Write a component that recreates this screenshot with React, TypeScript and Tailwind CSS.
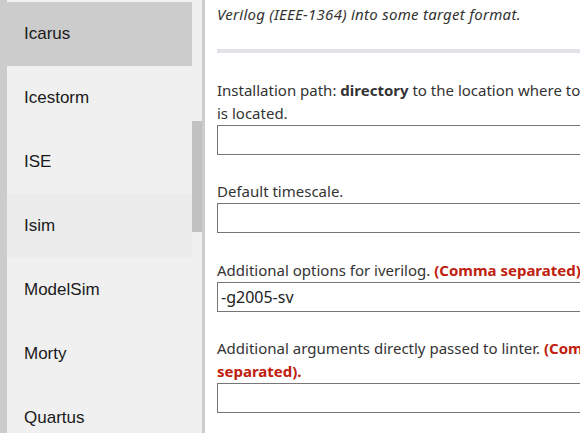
import React from "react";

const items = ["Icarus", "Icestorm", "ISE", "Isim", "ModelSim", "Morty", "Quartus"];

function Field({
  label,
  value,
  className,
}: {
  label: React.ReactNode;
  value?: string;
  className: string;
}) {
  return (
    <div className={className}>
      <div className="leading-[23px] whitespace-nowrap">{label}</div>
      <input
        readOnly
        value={value ?? ""}
        className="block w-full h-[30px] border border-[#767676] bg-white px-[3px] text-[16px] text-[#222] outline-none"
        style={{ fontFamily: '"Noto Sans", sans-serif' }}
      />
    </div>
  );
}

export default function App() {
  return (
    <div className="w-[580px] h-[433px] overflow-hidden flex bg-white">
      <div className="w-[7px] shrink-0 bg-[#cccccc]" />
      <div className="w-[195px] shrink-0 bg-[#f0f0f0] flex">
        <div className="w-[185px] shrink-0 pt-[2px] flex flex-col">
          {items.map((it, i) => (
            <div
              key={it}
              className={
                "h-[64px] shrink-0 flex items-center pl-[17px] text-[17px] text-[#1a1a1a] " +
                (i === 0 ? "bg-[#cccccc]" : i === 3 ? "bg-[#ececec]" : "bg-[#f0f0f0]")
              }
              style={{ fontFamily: '"Liberation Sans", Arial, sans-serif' }}
            >
              {it}
            </div>
          ))}
        </div>
        <div className="w-[10px] shrink-0">
          <div className="mt-[121px] h-[111px] bg-[#c1c1c1]" />
        </div>
      </div>
      <div className="w-[3px] shrink-0 bg-[#cccccc]" />
      <div
        className="w-[440px] shrink-0 pl-[12px] pt-[3px] text-[15px] text-[#333333]"
        style={{ fontFamily: '"Noto Sans", sans-serif' }}
      >
        <div className="italic leading-[23px] whitespace-nowrap tracking-[0.27px]">
          Verilog (IEEE-1364) into some target format.
        </div>
        <div className="mt-[23px] h-[4px] bg-[#e1e3e8]" />
        <Field
          className="mt-[26px]"
          label={
            <>
              Installation path: <span className="font-bold">directory</span> to the location where
              toolchain
              <br />
              is located.
            </>
          }
        />
        <Field className="mt-[25px]" label="Default timescale." />
        <Field
          className="mt-[26px]"
          value="-g2005-sv"
          label={
            <>
              Additional options for iverilog.{" "}
              <span className="font-bold text-[#c0200e]">(Comma separated)</span>
            </>
          }
        />
        <Field
          className="mt-[25px]"
          label={
            <>
              Additional arguments directly passed to linter.{" "}
              <span className="font-bold text-[#c0200e]">(Comma</span>
              <br />
              <span className="font-bold text-[#c0200e]">separated).</span>
            </>
          }
        />
      </div>
    </div>
  );
}
